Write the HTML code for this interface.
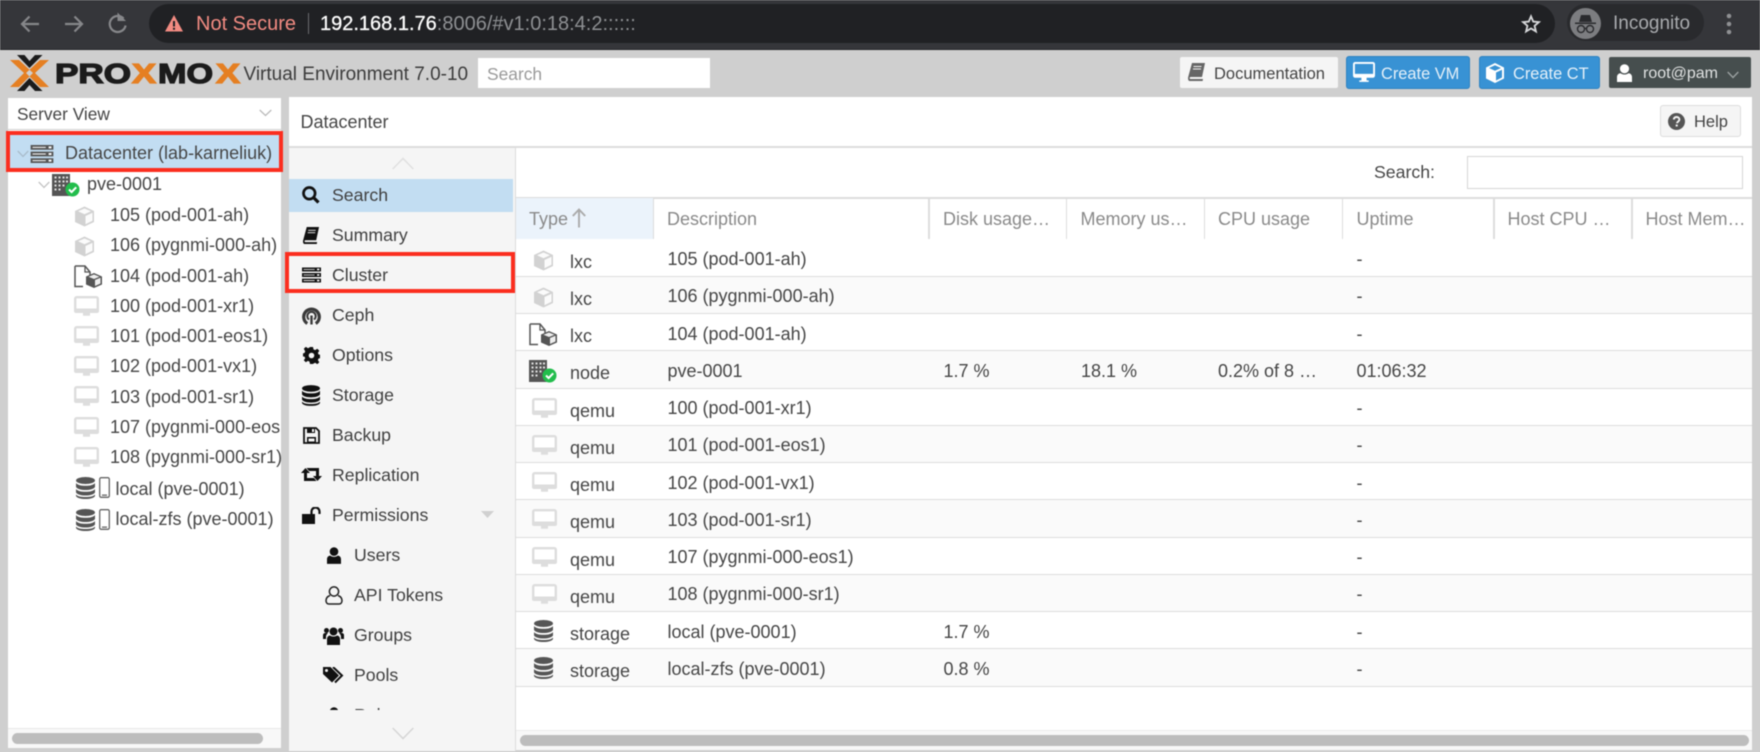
<!DOCTYPE html>
<html><head><meta charset="utf-8"><title>Proxmox VE</title>
<style>
html,body{margin:0;padding:0;width:1760px;height:752px;overflow:hidden;background:#cfcfcf}
#w{position:absolute;left:0;top:0;width:1760px;height:752px;overflow:hidden;background:#cfcfcf;font-family:"Liberation Sans",sans-serif;color:#464646;font-size:18px;filter:blur(.45px)}
#w div,#w span,#w svg{position:absolute}
.t{white-space:nowrap;line-height:20px}
.n{white-space:nowrap;line-height:20px;font-size:17.7px;color:#404040}
.h{white-space:nowrap;line-height:20px;top:209px;color:#8a8a8a}
.r{left:516px;width:1236px;height:37.25px;box-sizing:border-box;border-bottom:1.5px solid #dcdcdc;background:#fff}
.a{background:#fafafa}
.r span{white-space:nowrap;line-height:20px;top:9.5px}
.r .ty{left:54px;top:12px}
.r .de{left:151.5px}
.r .up{left:840.5px}
.r .di{left:427.5px}
.r .me{left:565px}
.r .cp{left:702px}
.v{top:197px;width:1.5px;height:42px;background:#ddd}
</style></head><body>
<svg width="0" height="0" style="position:absolute">
<defs>
<symbol id="srv" viewBox="0 0 24 19"><g fill="currentColor"><path d="M0 0h24v5H0zM0 7h24v5H0zM0 14h24v5H0z"/></g><g fill="#fff"><path d="M2 2h14v1H2zM2 9h14v1H2zM2 16h14v1H2zM19 1.5h3v2h-3zM19 8.500h3v2h-3zM19 15.500h3v2h-3z"/></g></symbol>
<symbol id="cube" viewBox="0 0 21 21"><path d="M10.500.5L20 5v11l-9.500 4.500L1 16V5z" fill="#d2d2d2"/><path d="M10.500 2.500L17 5.300l-6.500 3-6.500-3z" fill="#fbfbfb"/><path d="M11.500 10l7-3.200v8l-7 3.400z" fill="#fbfbfb"/></symbol>
<symbol id="tpl" viewBox="0 0 29 23"><path d="M1 1h10l5 6v3M9 21.500H1V1" fill="none" stroke="#555" stroke-width="1.500"/><path d="M11 1v6h5" fill="none" stroke="#555" stroke-width="1.300"/><path d="M20 8l8 3.500v8L20 23l-8-3.500v-8z" fill="#555"/><path d="M20 9.500l5.500 2.200L20 14l-5.500-2.300z" fill="#eee"/><path d="M21 15l5.500-2.200v5.700L21 21z" fill="#eee"/></symbol>
<symbol id="mon" viewBox="0 0 25 20"><rect x="1.200" y="1.200" width="22.600" height="14" rx="1.500" fill="#fff" stroke="#ddd" stroke-width="2.400"/><path d="M0 12.500h25V15a2 2 0 0 1-2 2H2a2 2 0 0 1-2-2zM9 17h7v2.800H9z" fill="#ddd"/></symbol>
<symbol id="db" viewBox="0 0 19 22"><g fill="#555"><ellipse cx="9.500" cy="3.500" rx="9.500" ry="3.500"/><path d="M0 6c1.500 2 5 2.800 9.500 2.800S17.500 8 19 6v4c-1.500 2-5 3-9.500 3S1.500 12 0 10zM0 12c1.500 2 5 2.800 9.500 2.800S17.500 14 19 12v3.500c-1.500 2-5 3-9.500 3S1.500 17.500 0 15.500zM0 17.500c1.500 2 5 2.500 9.500 2.500s8-.5 9.500-2.500V19c-1 2-5 3-9.500 3S1 21 0 19z"/></g></symbol>
<symbol id="ph" viewBox="0 0 11 21"><rect x=".7" y=".7" width="9.600" height="19.600" rx="1.500" fill="#fff" stroke="#666" stroke-width="1.300"/><path d="M3 17.500h5v1.300H3z" fill="#666"/></symbol>
<symbol id="nod" viewBox="0 0 28 23"><path d="M0 0h18v22H0z" fill="#555"/><path d="M2.500 2.500h2v2h-2zM6.500 2.500h2v2h-2zM10.500 2.500h2v2h-2zM14 2.500h2v2h-2zM2.500 6.500h2v2h-2zM6.500 6.500h2v2h-2zM10.500 6.500h2v2h-2zM14 6.500h2v2h-2zM2.500 10.500h2v2h-2zM6.500 10.500h2v2h-2zM10.500 10.500h2v2h-2zM2.500 14.500h2v2h-2zM6.500 14.500h2v2h-2z" fill="#ddd"/><circle cx="20.500" cy="15.500" r="7" fill="#22bd4c"/><path d="M17 15.500l2.600 2.600 4.600-4.800" fill="none" stroke="#fff" stroke-width="2"/></symbol>
</defs></svg>
<div id="w">

<!-- browser chrome -->
<div style="left:0;top:0;width:1760px;height:49px;background:#35363a"></div>
<div style="left:0;top:49px;width:1760px;height:1px;background:#26272a"></div>
<div style="left:149px;top:4px;width:1406px;height:39px;border-radius:20px;background:#202124"></div>
<svg style="left:18px;top:12px" width="126" height="24" viewBox="0 0 126 24" fill="none" stroke="#86878a" stroke-width="2.200"><path d="M21 12H4M11.500 4.500L4 12l7.500 7.500"/><path d="M47 12h17M56.500 4.500L64 12l-7.500 7.500"/><path d="M105.600 6.500a8 8 0 1 0 2 7"/><path d="M100.500 1.500v8.500h8.500z" fill="#86878a" stroke="none" transform="translate(-1 -1) rotate(0)"/></svg>
<svg style="left:165px;top:15px" width="18" height="17" viewBox="0 0 18 17"><path d="M9 0l9 16.500H0z" fill="#f28b82"/><path d="M8 6h2v5.500H8zM8 12.800h2v2H8z" fill="#202124"/></svg>
<span class="t" style="left:196px;top:14px;font-size:20px;color:#f28b82">Not Secure</span>
<div style="left:307.500px;top:13px;width:1.500px;height:21px;background:#6a6b6e"></div>
<span class="t" style="left:320px;top:14px;font-size:20px;color:#8e9093"><span style="position:static;color:#fff;-webkit-text-stroke:.25px #fff">192.168.1.76</span>:8006/#v1:0:18:4:2::::::</span>
<svg style="left:1521px;top:14px" width="20" height="20" viewBox="0 0 24 24"><path d="M12 2.800l2.700 6.300 6.800.6-5.200 4.500 1.600 6.700-5.900-3.600-5.900 3.600 1.600-6.700-5.200-4.500 6.800-.6z" fill="none" stroke="#d6d7d9" stroke-width="2.200"/></svg>
<div style="left:1567px;top:4px;width:137px;height:37px;border-radius:19px;background:#292a2d"></div>
<svg style="left:1570px;top:8px" width="31" height="31" viewBox="0 0 31 31"><circle cx="15.500" cy="15.500" r="15.500" fill="#7c7d80"/><path d="M5 14.500h21v1.500H5zM9 14l2-7h9l2 7z" fill="#2a2b2e"/><circle cx="11" cy="21" r="3.500" fill="none" stroke="#2a2b2e" stroke-width="1.400"/><circle cx="20" cy="21" r="3.500" fill="none" stroke="#2a2b2e" stroke-width="1.400"/><path d="M14.500 20.500h2" stroke="#2a2b2e" stroke-width="1.400"/></svg>
<span class="t" style="left:1613px;top:14px;font-size:19px;color:#a9abae">Incognito</span>
<svg style="left:1726px;top:13px" width="6" height="22" viewBox="0 0 6 22" fill="#8f9093"><circle cx="3" cy="3" r="2.300"/><circle cx="3" cy="11" r="2.300"/><circle cx="3" cy="19" r="2.300"/></svg>

<!-- PVE header -->
<svg style="left:0;top:50px" width="250" height="45" viewBox="0 50 250 45">
<path d="M17 55h7.500l5 6 5.500-6h7.500L29.500 68zM17 91h7.500l5-6 5.500 6h7.500L29.500 78z" fill="#1b1b1b"/>
<path d="M10 60h9l14 13-14 14h-9l14-14zM49 60h-9L26 73l14 14h9L35 73z" fill="#e57f22"/>
<g font-family="Liberation Sans" font-weight="bold" font-size="28" stroke-width="1.300">
<text x="55" y="83" textLength="76" lengthAdjust="spacingAndGlyphs" fill="#1b1b1b" stroke="#1b1b1b">PRO</text>
<text x="132" y="83" textLength="24" lengthAdjust="spacingAndGlyphs" fill="#e57f22" stroke="#e57f22">X</text>
<text x="158" y="83" textLength="55" lengthAdjust="spacingAndGlyphs" fill="#1b1b1b" stroke="#1b1b1b">MO</text>
<text x="216" y="83" textLength="24" lengthAdjust="spacingAndGlyphs" fill="#e57f22" stroke="#e57f22">X</text>
</g></svg>
<span class="t" style="left:243.500px;top:65px;font-size:19px;color:#3c3c3c">Virtual Environment 7.0-10</span>
<div style="left:478px;top:58px;width:232px;height:30px;background:#fff"></div>
<span class="t" style="left:487px;top:64px;font-size:17.400px;color:#9a9a9a">Search</span>

<div style="left:1180px;top:57px;width:158px;height:31px;background:#f5f5f5;border-radius:2px"></div>
<svg style="left:1188px;top:63px" width="17" height="18" viewBox="0 0 17 18"><path d="M4 0h13l-3 14H2.500c-1 0-1.200 2 0 2H15l-.4 2H2C.3 18-.3 16 .2 14z" fill="#666"/><path d="M5.500 3.500h8M5 6h8" stroke="#f5f5f5" stroke-width="1"/></svg>
<span class="t" style="left:1214px;top:63.500px;font-size:16.500px;color:#444">Documentation</span>
<div style="left:1346px;top:56px;width:122px;height:31px;background:#3892d4;border:1px solid #2e82c2;border-radius:3px"></div>
<svg style="left:1353px;top:62px" width="22" height="21" viewBox="0 0 21 20"><path d="M2 0h17a2 2 0 0 1 2 2v11a2 2 0 0 1-2 2h-6v2.500h2V19H6v-1.500h2V15H2a2 2 0 0 1-2-2V2a2 2 0 0 1 2-2z" fill="#fff"/><rect x="1.800" y="1.800" width="17.400" height="9.500" fill="#3892d4"/></svg>
<span class="t" style="left:1381px;top:63.500px;font-size:16.400px;color:#e4f0f9">Create VM</span>
<div style="left:1479px;top:56px;width:119px;height:31px;background:#3892d4;border:1px solid #2e82c2;border-radius:3px"></div>
<svg style="left:1486px;top:63px" width="18" height="20" viewBox="0 0 18 20"><path d="M9 0l9 4.500v11L9 20l-9-4.500v-11z" fill="#fff"/><path d="M9 2.200L15 5 9 7.800 3 5zM10 9.500l6-2.800v7.800L10 17.500z" fill="#3892d4"/></svg>
<span class="t" style="left:1513px;top:63.500px;font-size:16.400px;color:#e4f0f9">Create CT</span>
<div style="left:1609px;top:57px;width:142px;height:31px;background:#464e4e;border-radius:2px"></div>
<svg style="left:1617px;top:64px" width="15" height="18" viewBox="0 0 15 18"><circle cx="7.500" cy="4.800" r="4.600" fill="#fff"/><path d="M0 18v-5c0-2.500 2-3.800 3.500-3.800 1 .7 2.500 1.300 4 1.300s3-.6 4-1.300c1.500 0 3.500 1.300 3.500 3.800v5z" fill="#fff"/></svg>
<span class="t" style="left:1643px;top:63.500px;font-size:16px;color:#dfe1e1">root@pam</span>
<svg style="left:1727px;top:71px" width="12" height="8" viewBox="0 0 12 8"><path d="M.7 1l5.300 5.500L11.300 1" fill="none" stroke="#9aa0a0" stroke-width="1.400"/></svg>

<!-- left -->
<div style="left:8px;top:98px;width:273px;height:31px;background:#fff"></div>
<span class="t" style="left:17px;top:104px;font-size:17.300px;color:#444">Server View</span>
<svg style="left:259px;top:109px" width="13" height="8" viewBox="0 0 13 8"><path d="M.7 1l5.800 5.500L12.300 1" fill="none" stroke="#bbb" stroke-width="1.300"/></svg>
<div style="left:8px;top:130px;width:273px;height:618px;background:#fff"></div>
<div style="left:8px;top:133px;width:273px;height:37px;background:#c2ddf2"></div>
<svg style="left:17px;top:150px" width="12" height="8" viewBox="0 0 12 8"><path d="M.7 1l5.300 5.500L11.300 1" fill="none" stroke="#a9bccb" stroke-width="1.300"/></svg>
<svg style="left:30px;top:145px;color:#555" width="24" height="18"><use href="#srv"/></svg>
<span class="t" style="left:65px;top:143px">Datacenter (lab-karneliuk)</span>
<svg style="left:38px;top:181px" width="12" height="8" viewBox="0 0 12 8"><path d="M.7 1l5.300 5.500L11.300 1" fill="none" stroke="#c4c4c4" stroke-width="1.300"/></svg>
<svg style="left:52px;top:174px" width="28" height="23"><use href="#nod"/></svg>
<span class="t" style="left:87px;top:174px">pve-0001</span>

<svg style="left:74px;top:206px" width="21" height="21"><use href="#cube"/></svg>
<span class="t" style="left:110px;top:205px">105 (pod-001-ah)</span>
<svg style="left:74px;top:236px" width="21" height="21"><use href="#cube"/></svg>
<span class="t" style="left:110px;top:235px">106 (pygnmi-000-ah)</span>
<svg style="left:74px;top:265px" width="29" height="23"><use href="#tpl"/></svg>
<span class="t" style="left:110px;top:265.500px">104 (pod-001-ah)</span>
<svg style="left:74px;top:296px" width="25" height="20"><use href="#mon"/></svg>
<span class="t" style="left:110px;top:296px">100 (pod-001-xr1)</span>
<svg style="left:74px;top:326px" width="25" height="20"><use href="#mon"/></svg>
<span class="t" style="left:110px;top:326px">101 (pod-001-eos1)</span>
<svg style="left:74px;top:356px" width="25" height="20"><use href="#mon"/></svg>
<span class="t" style="left:110px;top:356px">102 (pod-001-vx1)</span>
<svg style="left:74px;top:386px" width="25" height="20"><use href="#mon"/></svg>
<span class="t" style="left:110px;top:387px">103 (pod-001-sr1)</span>
<svg style="left:74px;top:417px" width="25" height="20"><use href="#mon"/></svg>
<div style="left:110px;top:417px;width:171px;height:22px;overflow:hidden"><span class="t" style="left:0;top:0">107 (pygnmi-000-eos1)</span></div>
<svg style="left:74px;top:447px" width="25" height="20"><use href="#mon"/></svg>
<span class="t" style="left:110px;top:447px">108 (pygnmi-000-sr1)</span>
<svg style="left:76px;top:477px" width="19" height="22"><use href="#db"/></svg>
<svg style="left:99px;top:477px" width="11" height="21"><use href="#ph"/></svg>
<span class="t" style="left:115.500px;top:479px">local (pve-0001)</span>
<svg style="left:76px;top:509px" width="19" height="22"><use href="#db"/></svg>
<svg style="left:99px;top:509px" width="11" height="21"><use href="#ph"/></svg>
<span class="t" style="left:115.500px;top:509px">local-zfs (pve-0001)</span>
<div style="left:8px;top:728px;width:273px;height:20px;background:#f8f8f8;border-top:1px solid #e8e8e8;box-sizing:border-box"></div>
<div style="left:12px;top:733px;width:251px;height:11px;border-radius:6px;background:#bdbdbd"></div>
<div style="left:6px;top:131px;width:277px;height:41px;box-sizing:border-box;border:4.500px solid #fb2e1f"></div>

<!-- main -->
<div style="left:289px;top:97px;width:1463px;height:653px;background:#fff"></div>
<span class="t" style="left:300.500px;top:112px">Datacenter</span>
<div style="left:1660px;top:105px;width:81px;height:32px;box-sizing:border-box;background:#f5f5f5;border:1.500px solid #ddd;border-radius:3px"></div>
<svg style="left:1668px;top:113px" width="17" height="17" viewBox="0 0 17 17"><circle cx="8.500" cy="8.500" r="8.500" fill="#555"/><path d="M5.800 6.500c.2-1.700 1.300-2.500 2.800-2.500s2.800 1 2.800 2.400c0 2.200-2.400 2.100-2.400 3.800" fill="none" stroke="#f5f5f5" stroke-width="1.900"/><path d="M7.700 11.500h2v2h-2z" fill="#f5f5f5"/></svg>
<span class="t" style="left:1694px;top:112px;font-size:16.500px;color:#444">Help</span>
<div style="left:289px;top:146px;width:1463px;height:1.500px;background:#dcdcdc"></div>
<span class="t" style="left:1374px;top:162px;font-size:17.700px">Search:</span>
<div style="left:1466.500px;top:156px;width:276px;height:33px;box-sizing:border-box;border:1.500px solid #d6d6d6;background:#fff"></div>

<!-- grid head -->
<div style="left:516px;top:197px;width:1236px;height:1.500px;background:#dcdcdc"></div>
<div style="left:516px;top:198px;width:137px;height:41px;background:#ebf3fb"></div>
<div class="v" style="left:652.500px"></div><div class="v" style="left:928px"></div><div class="v" style="left:1065.500px"></div><div class="v" style="left:1203.500px"></div><div class="v" style="left:1341.500px"></div><div class="v" style="left:1493px"></div><div class="v" style="left:1631px"></div>
<span class="h" style="left:529px">Type</span>
<svg style="left:572px;top:208px" width="14" height="20" viewBox="0 0 14 20"><path d="M7 19.500V2M.8 8L7 1.500 13.200 8" fill="none" stroke="#aaa" stroke-width="1.900"/></svg>
<span class="h" style="left:667px">Description</span>
<span class="h" style="left:943px">Disk usage…</span>
<span class="h" style="left:1080.500px">Memory us…</span>
<span class="h" style="left:1218px">CPU usage</span>
<span class="h" style="left:1356.500px">Uptime</span>
<span class="h" style="left:1507.500px">Host CPU …</span>
<span class="h" style="left:1645.500px">Host Mem…</span>

<!-- grid rows -->
<div class="r" style="top:239.500px"><svg style="left:17px;top:10px" width="21" height="21"><use href="#cube"/></svg><span class="ty">lxc</span><span class="de">105 (pod-001-ah)</span><span class="up">-</span></div>
<div class="r a" style="top:276.750px"><svg style="left:17px;top:10px" width="21" height="21"><use href="#cube"/></svg><span class="ty">lxc</span><span class="de">106 (pygnmi-000-ah)</span><span class="up">-</span></div>
<div class="r" style="top:314px"><svg style="left:13px;top:9px" width="29" height="23"><use href="#tpl"/></svg><span class="ty">lxc</span><span class="de">104 (pod-001-ah)</span><span class="up">-</span></div>
<div class="r a" style="top:351.250px"><svg style="left:13px;top:9px" width="28" height="23"><use href="#nod"/></svg><span class="ty">node</span><span class="de">pve-0001</span><span class="di">1.7 %</span><span class="me">18.1 %</span><span class="cp">0.2% of 8 …</span><span class="up">01:06:32</span></div>
<div class="r" style="top:388.500px"><svg style="left:16px;top:9px" width="25" height="20"><use href="#mon"/></svg><span class="ty">qemu</span><span class="de">100 (pod-001-xr1)</span><span class="up">-</span></div>
<div class="r a" style="top:425.750px"><svg style="left:16px;top:9px" width="25" height="20"><use href="#mon"/></svg><span class="ty">qemu</span><span class="de">101 (pod-001-eos1)</span><span class="up">-</span></div>
<div class="r" style="top:463px"><svg style="left:16px;top:9px" width="25" height="20"><use href="#mon"/></svg><span class="ty">qemu</span><span class="de">102 (pod-001-vx1)</span><span class="up">-</span></div>
<div class="r a" style="top:500.250px"><svg style="left:16px;top:9px" width="25" height="20"><use href="#mon"/></svg><span class="ty">qemu</span><span class="de">103 (pod-001-sr1)</span><span class="up">-</span></div>
<div class="r" style="top:537.500px"><svg style="left:16px;top:9px" width="25" height="20"><use href="#mon"/></svg><span class="ty">qemu</span><span class="de">107 (pygnmi-000-eos1)</span><span class="up">-</span></div>
<div class="r a" style="top:574.750px"><svg style="left:16px;top:9px" width="25" height="20"><use href="#mon"/></svg><span class="ty">qemu</span><span class="de">108 (pygnmi-000-sr1)</span><span class="up">-</span></div>
<div class="r" style="top:612px"><svg style="left:18px;top:8px" width="19" height="22"><use href="#db"/></svg><span class="ty">storage</span><span class="de">local (pve-0001)</span><span class="di">1.7 %</span><span class="up">-</span></div>
<div class="r a" style="top:649.250px"><svg style="left:18px;top:8px" width="19" height="22"><use href="#db"/></svg><span class="ty">storage</span><span class="de">local-zfs (pve-0001)</span><span class="di">0.8 %</span><span class="up">-</span></div>
<div style="left:516px;top:730px;width:1236px;height:20px;background:#f8f8f8;border-top:1px solid #ececec;box-sizing:border-box"></div>
<div style="left:520px;top:735px;width:1229px;height:11px;border-radius:6px;background:#bdbdbd"></div>

<!-- nav -->
<div style="left:289px;top:147.500px;width:225.500px;height:603px;background:#f5f5f5;border-right:1.500px solid #dcdcdc;box-sizing:content-box"></div>
<svg style="left:392px;top:157px" width="22" height="13" viewBox="0 0 22 13"><path d="M.7 12L11 1.500 21.300 12" fill="none" stroke="#e0e0e0" stroke-width="1.500"/></svg>
<div style="left:289px;top:179px;width:224px;height:33px;background:#c2ddf2"></div>
<svg style="left:302px;top:186px;color:#111" width="18" height="18" viewBox="0 0 18 18"><circle cx="7.300" cy="7.300" r="5.800" fill="none" stroke="#111" stroke-width="2.700"/><path d="M11.500 11.500l5 5" stroke="#111" stroke-width="3.200"/></svg>
<span class="n" style="left:332px;top:185px">Search</span>
<svg style="left:302px;top:227px" width="18" height="17" viewBox="0 0 17 18"><path d="M4 0h13l-3 14H2.500c-1 0-1.200 2 0 2H15l-.4 2H2C.3 18-.3 16 .2 14z" fill="#111"/><path d="M5.500 3.500h8M5 6h8" stroke="#f5f5f5" stroke-width="1"/></svg>
<span class="n" style="left:332px;top:225px">Summary</span>
<svg style="left:302px;top:267px;color:#111" width="19" height="16"><use href="#srv"/></svg>
<span class="n" style="left:332px;top:265px">Cluster</span>
<svg style="left:302px;top:306px" width="19" height="19" viewBox="0 0 19 19" fill="none" stroke="#3a3a3a"><path d="M5.300 17.500a7.800 7.800 0 1 1 8.400 0" stroke-width="3.200"/><path d="M7 13.500a4.200 4.200 0 1 1 5 0" stroke-width="2"/><path d="M9.500 9.500v9" stroke-width="2.400"/></svg>
<span class="n" style="left:332px;top:305px">Ceph</span>
<svg style="left:303px;top:347px" width="17" height="17" viewBox="0 0 17 17"><path d="M7 0h3l.5 2.400 1.600.7L14.300 1.800l2 2-1.400 2.100.7 1.600 2.400.5v3l-2.400.5-.7 1.600 1.400 2.100-2 2-2.100-1.400-1.600.7L10 17H7l-.5-2.400-1.600-.7-2.100 1.400-2-2 1.400-2.100-.7-1.600L-.9 9.500v-3l2.400-.5.700-1.600L.8 1.800l2-2 2.100 1.400 1.600-.7z" fill="#111"/><circle cx="8.500" cy="8.500" r="2.800" fill="#f5f5f5"/></svg>
<span class="n" style="left:332px;top:345px">Options</span>
<svg style="left:302px;top:385px" width="18" height="21" viewBox="0 0 19 22" style="color:#111"><g fill="#111"><ellipse cx="9.500" cy="3.500" rx="9.500" ry="3.500"/><path d="M0 6c1.500 2 5 2.800 9.500 2.800S17.500 8 19 6v4c-1.500 2-5 3-9.500 3S1.500 12 0 10zM0 12c1.500 2 5 2.800 9.500 2.800S17.500 14 19 12v3.500c-1.500 2-5 3-9.500 3S1.500 17.500 0 15.500zM0 17.500c1.500 2 5 2.500 9.500 2.500s8-.5 9.500-2.500V19c-1 2-5 3-9.500 3S1 21 0 19z"/></g></svg>
<span class="n" style="left:332px;top:385px">Storage</span>
<svg style="left:303px;top:427px" width="17" height="17" viewBox="0 0 17 17"><path d="M1 1h12l3 3v12H1z" fill="none" stroke="#111" stroke-width="1.800"/><path d="M4 1h8v5H4zM4 10h9v6H4z" fill="#111"/><path d="M9 2h2v3H9zM5.500 11.500h6v3h-6z" fill="#f5f5f5"/></svg>
<span class="n" style="left:332px;top:425px">Backup</span>
<svg style="left:301px;top:467px" width="21" height="15" viewBox="0 0 21 15"><path d="M0 6L4.500 1 9 6H6v5h7l2.500 3H3V6zM21 9l-4.500 5L12 9h3V4H8L5.500 1H18v8z" fill="#111"/></svg>
<span class="n" style="left:332px;top:465px">Replication</span>
<svg style="left:302px;top:507px" width="19" height="17" viewBox="0 0 19 17"><path d="M0 7h13v10H0z" fill="#111"/><path d="M9.500 7V4.500a4 4 0 0 1 8 0V7" fill="none" stroke="#111" stroke-width="2.200"/></svg>
<span class="n" style="left:332px;top:505px">Permissions</span>
<svg style="left:481px;top:511px" width="13" height="7" viewBox="0 0 13 7"><path d="M0 0h13L6.500 7z" fill="#d0d0d0"/></svg>
<svg style="left:327px;top:547px" width="14" height="17" viewBox="0 0 15 18"><circle cx="7.500" cy="4.800" r="4.600" fill="#111"/><path d="M0 18v-5c0-2.500 2-3.800 3.500-3.800 1 .7 2.200 1.300 4 1.300s3-.6 4-1.300c1.500 0 3.500 1.300 3.500 3.800v5z" fill="#111"/></svg>
<span class="n" style="left:354px;top:545px">Users</span>
<svg style="left:325px;top:586px" width="18" height="19" viewBox="0 0 18 19" fill="none" stroke="#222" stroke-width="1.500"><circle cx="9" cy="5.500" r="4.600"/><path d="M5 9.500C2.500 10.500 1 12 1 14.500c0 2 1 3.500 3 3.500h10c2 0 3-1.500 3-3.500 0-2.500-1.500-4-4-5"/></svg>
<span class="n" style="left:354px;top:585px">API Tokens</span>
<svg style="left:323px;top:626px" width="21" height="19" viewBox="0 0 21 19" fill="#111"><circle cx="10.500" cy="5.500" r="4"/><circle cx="3.500" cy="4.500" r="2.500"/><circle cx="17.500" cy="4.500" r="2.500"/><path d="M4 19v-6c0-2 1.500-3.500 3-3.500 1 .7 2.200 1 3.500 1s2.500-.3 3.500-1c1.500 0 3 1.500 3 3.500v6z"/><path d="M0 13v-4c0-1 1-2 2-2h3c-1 1-2 2-2 4v2zM21 13v-4c0-1-1-2-2-2h-3c1 1 2 2 2 4v2z"/></svg>
<span class="n" style="left:354px;top:625px">Groups</span>
<svg style="left:323px;top:667px" width="21" height="17" viewBox="0 0 21 17"><path d="M0 0h7.500l8.500 8.500-7 7L0 7z" fill="#111"/><circle cx="3.500" cy="3.500" r="1.500" fill="#f5f5f5"/><path d="M10 0l9 8.500-7 7" fill="none" stroke="#111" stroke-width="2"/></svg>
<span class="n" style="left:354px;top:665px">Pools</span>
<svg style="left:327px;top:707px" width="14" height="17" viewBox="0 0 15 18"><circle cx="7.500" cy="4.800" r="4.600" fill="#111"/></svg>
<span class="n" style="left:354px;top:705px">Roles</span>
<div style="left:289px;top:710px;width:225px;height:40px;background:#f5f5f5"></div>
<svg style="left:392px;top:727px" width="22" height="13" viewBox="0 0 22 13"><path d="M.7 1L11 11.500 21.300 1" fill="none" stroke="#d6d6d6" stroke-width="1.500"/></svg>
<div style="left:285px;top:252px;width:230px;height:41px;box-sizing:border-box;border:4.500px solid #fb2e1f"></div>

</div>
</body></html>
